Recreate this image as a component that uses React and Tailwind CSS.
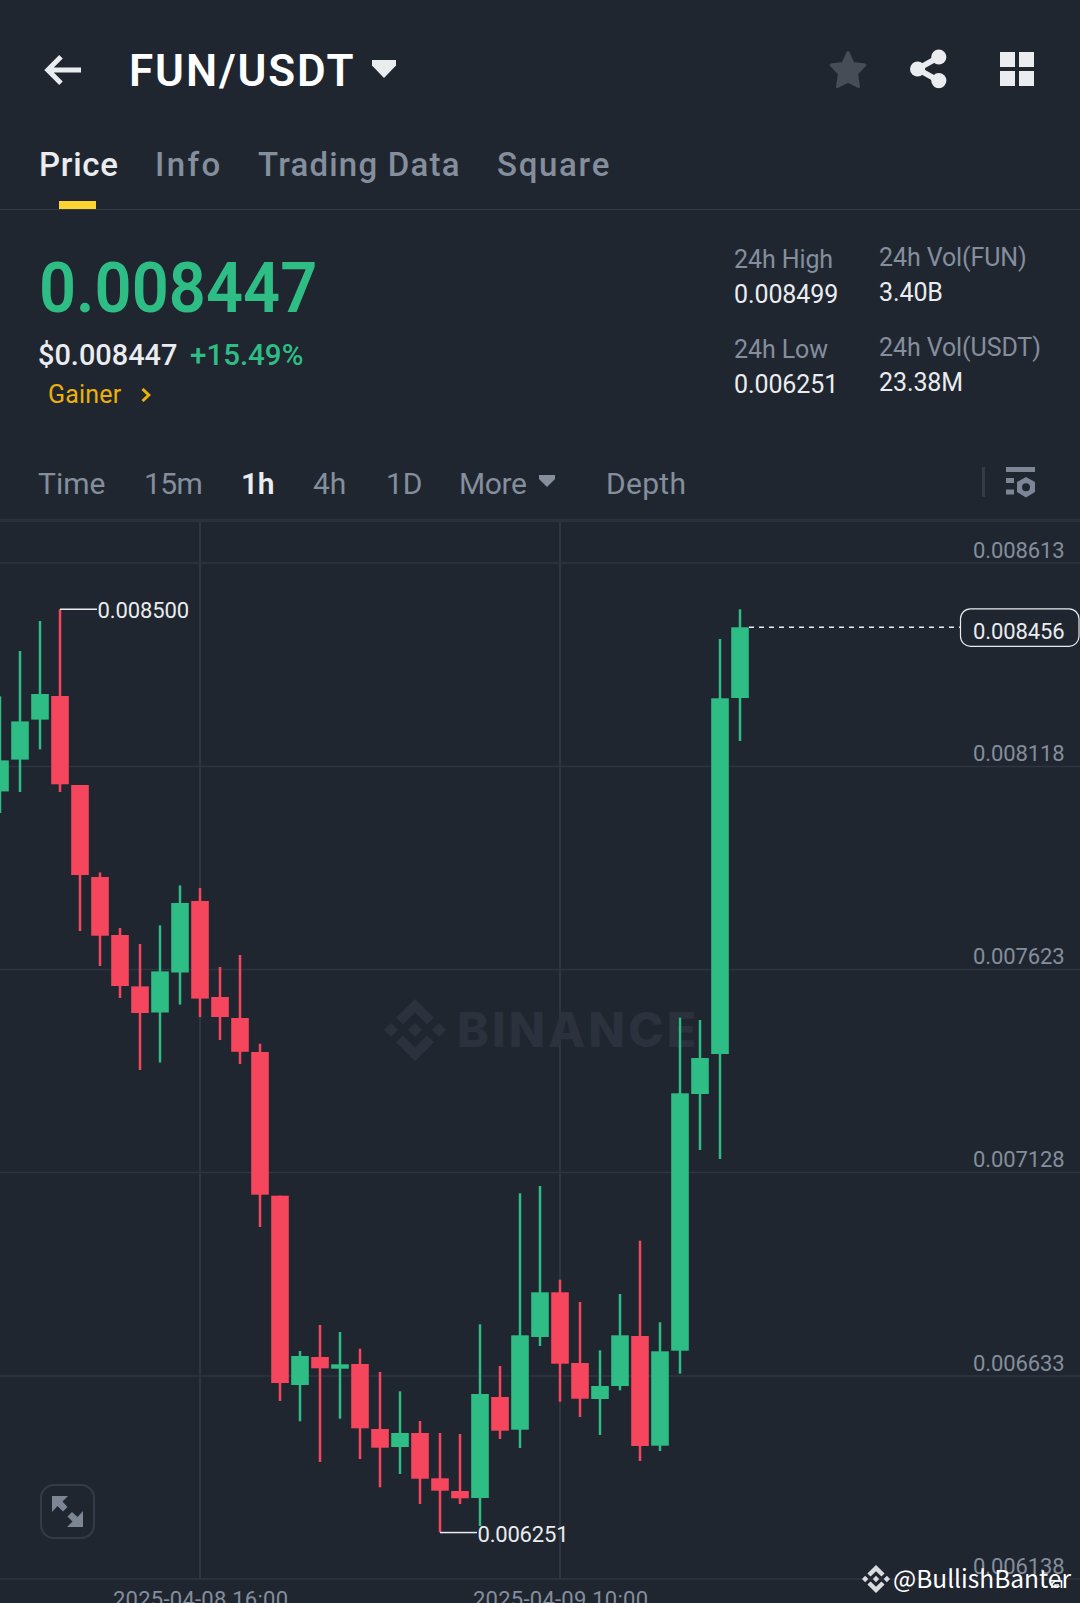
import React, { useState } from "react";

const GREEN = "#2EBD85";
const RED = "#F6465D";

// [x, high, bodyTop, bodyBottom, low, up]
const candles = [
  [0, 696.4, 760.4, 791.4, 813, 1],
  [20, 651, 721.4, 759.6, 792, 1],
  [40, 621, 694, 719.6, 749.3, 1],
  [60, 609.3, 696, 784.3, 792, 0],
  [80, 785, 785, 875, 931, 0],
  [100, 872.5, 877, 935.7, 966, 0],
  [120, 928, 935, 986, 998, 0],
  [140, 944, 986.4, 1013, 1070, 0],
  [160, 925.4, 971.4, 1012.5, 1062.5, 1],
  [180, 885.4, 903, 972.5, 1004.6, 1],
  [200, 888, 901, 998.6, 1017, 0],
  [220, 967, 997, 1017, 1040, 0],
  [240, 955, 1018, 1051.8, 1064, 0],
  [260, 1043.7, 1052, 1194.7, 1227, 0],
  [280, 1195.7, 1195.7, 1383, 1401, 0],
  [300, 1351, 1356, 1385, 1421.3, 1],
  [320, 1325, 1357, 1368.3, 1462, 0],
  [340, 1332, 1364.3, 1368.7, 1418.7, 1],
  [360, 1348.7, 1364, 1428.3, 1459, 0],
  [380, 1372, 1429, 1447.7, 1487.3, 0],
  [400, 1391.3, 1433, 1447, 1474, 1],
  [420, 1421, 1433, 1478.7, 1504, 0],
  [440, 1433, 1478.3, 1490.7, 1532.3, 0],
  [460, 1434, 1491, 1498.3, 1504, 0],
  [480, 1324.3, 1394, 1498, 1526, 1],
  [500, 1366, 1397, 1430.7, 1439, 0],
  [520, 1193.3, 1335.3, 1429.7, 1448, 1],
  [540, 1186, 1292.3, 1337, 1346, 1],
  [560, 1279.7, 1292.3, 1363.7, 1401.7, 0],
  [580, 1302, 1363, 1398.7, 1417, 0],
  [600, 1350.3, 1386, 1399, 1435, 1],
  [620, 1294, 1335.3, 1386, 1390.3, 1],
  [640, 1240.7, 1336, 1446, 1461, 0],
  [660, 1322.3, 1351.3, 1445.7, 1451, 1],
  [680, 1017.7, 1093.3, 1350.7, 1373.7, 1],
  [700, 1020, 1058, 1094, 1150, 1],
  [720, 639, 698.3, 1054, 1159, 1],
  [740, 609.3, 627.3, 698, 741, 1],
];

const priceLevels = [
  { y: 563, label: "0.008613" },
  { y: 766.5, label: "0.008118" },
  { y: 969.5, label: "0.007623" },
  { y: 1172.5, label: "0.007128" },
  { y: 1376, label: "0.006633" },
  { y: 1579, label: "0.006138" },
];

const tabs = [
  { name: "Price", className: "w-[76px] mr-10 tracking-[0.7px]" },
  { name: "Info", className: "w-[66px] mr-[37px] tracking-[2.4px]" },
  { name: "Trading Data", className: "w-[201px] mr-[38px] tracking-[1.2px]" },
  { name: "Square", className: "w-[112px] tracking-[1.7px]" },
];

const intervals = [
  { name: "Time", className: "w-[106px]" },
  { name: "15m", className: "w-[97px] tracking-[-0.6px]" },
  { name: "1h", className: "w-[72px] tracking-[-0.5px]" },
  { name: "4h", className: "w-[73px]" },
  { name: "1D", className: "w-[73px]" },
];

const BinanceMark = (props) => (
  <svg viewBox="0 0 62 62" fill="currentColor" {...props}>
    <path d="M31 0 50 18.7 43 25.5 31 13.6 19 25.5 12 18.7Z" />
    <path d="M31 62 50 43.3 43 36.5 31 48.4 19 36.5 12 43.3Z" />
    <path d="M31 24 38 31 31 38 24 31Z" />
    <path d="M7 24 14 31 7 38 0 31Z" />
    <path d="M55 24 62 31 55 38 48 31Z" />
  </svg>
);

const Header = () => (
  <header className="flex items-center h-[139px] pl-[44px] pr-[46px]">
    <svg width="38" height="30" viewBox="0 0 38 30" fill="none" stroke="#EAECEF" strokeWidth="5">
      <path d="M3.5 15H37M17 1.8 3.8 15 17 28.2" />
    </svg>
    <h1 className="ml-[47px] w-[225px] pt-[3px] text-[44px] leading-[60px] font-semibold tracking-[1.9px] text-white whitespace-nowrap">
      FUN/USDT
    </h1>
    <svg className="ml-[18px] -mt-px" width="24" height="18" viewBox="0 0 24 18" fill="#EAECEF">
      <path d="M0 0H24V5.5L12 18 0 5.5Z" />
    </svg>
    <div className="flex items-center ml-auto">
      <svg className="mt-px" width="38" height="40" viewBox="0 0 38 40" fill="#474D57" stroke="#474D57" strokeWidth="3" strokeLinejoin="round">
        <path d="M19 2.5 24 13.5 35.8 15 27.5 23.8 29.5 36.5 19 31.2 8.5 36.5 10.5 23.8 2.2 15 14 13.5Z" />
      </svg>
      <svg className="ml-[43px] -mt-px" width="37" height="40" viewBox="0 0 37 40" fill="#EAECEF">
        <path d="M7.5 20 29 8M7.5 20 29 32" stroke="#EAECEF" strokeWidth="5.5" />
        <circle cx="7.6" cy="20" r="7.6" />
        <circle cx="28.8" cy="8" r="7.6" />
        <circle cx="28.8" cy="31.6" r="7.6" />
      </svg>
      <div className="grid grid-cols-2 gap-1 ml-[53px] -mt-px w-[34px] h-[34px]">
        <i className="bg-[#EAECEF]" />
        <i className="bg-[#EAECEF]" />
        <i className="bg-[#EAECEF]" />
        <i className="bg-[#EAECEF]" />
      </div>
    </div>
  </header>
);

const Tabs = () => {
  const [active, setActive] = useState("Price");

  return (
    <nav className="flex h-[71px] pt-[2px] pl-[39px] border-b border-[#333B47] text-[33px] leading-[48px] font-medium whitespace-nowrap">
      {tabs.map((tab) => (
        <button
          key={tab.name}
          onClick={() => setActive(tab.name)}
          className={`flex flex-col items-start ${tab.className} ${active === tab.name ? "text-[#EAECEF]" : "text-[#848E9C]"}`}
        >
          <span>{tab.name}</span>
          {active === tab.name && <span className="self-center mt-3 w-[37px] h-2 bg-[#FCD535]" />}
        </button>
      ))}
    </nav>
  );
};

const Stat = ({ label, value }) => (
  <div className="text-[25px] leading-[35px] tracking-[-0.1px] whitespace-nowrap">
    <p className="text-[#848E9C]">{label}</p>
    <p className="text-[#EAECEF]">{value}</p>
  </div>
);

const Summary = () => (
  <section className="flex justify-between h-[238px] pl-[38px]">
    <div className="pt-[42px]">
      <p className="ml-px text-[70px] leading-[72px] font-semibold text-[#2EBD85] origin-left scale-x-[0.928]">0.008447</p>
      <div className="flex mt-[13px] text-[29.5px] leading-9 font-medium whitespace-nowrap">
        <span className="w-[152px] text-[#EAECEF] origin-left scale-x-[0.98]">$0.008447</span>
        <span className="text-[#2EBD85]">+15.49%</span>
      </div>
      <div className="flex items-center mt-[6px] pl-[10px] text-[25px] leading-8 text-[#EAB00C]">
        <span className="w-[93px] tracking-[0.2px]">Gainer</span>
        <svg className="-mt-px" width="10" height="14" viewBox="0 0 10 14" fill="none" stroke="currentColor" strokeWidth="3">
          <path d="M1.5 1 7.8 7 1.5 13" />
        </svg>
      </div>
    </div>
    <div className="flex w-[346px]">
      <div className="flex flex-col gap-5 w-[145px] pt-8">
        <Stat label="24h High" value="0.008499" />
        <Stat label="24h Low" value="0.006251" />
      </div>
      <div className="flex flex-col gap-5 pt-[30px]">
        <Stat label="24h Vol(FUN)" value="3.40B" />
        <Stat label="24h Vol(USDT)" value="23.38M" />
      </div>
    </div>
  </section>
);

const IntervalBar = () => {
  const [selected, setSelected] = useState("1h");

  return (
    <div className="flex items-center h-[74px] pl-[38px] pr-[45px] border-b-[3px] border-[#29313C] text-[30px] text-[#848E9C] whitespace-nowrap">
      {intervals.map((item) => (
        <button
          key={item.name}
          onClick={() => setSelected(item.name)}
          className={`text-left ${item.className} ${selected === item.name ? "font-semibold text-[#EAECEF]" : ""}`}
        >
          {item.name}
        </button>
      ))}
      <button className="flex items-center w-[147px]">
        <span className="w-[80px] text-left tracking-[-0.4px]">More</span>
        <svg className="-mt-[5px]" width="16" height="12" viewBox="0 0 16 12" fill="currentColor">
          <path d="M0 0H16V4L8 12 0 4Z" />
        </svg>
      </button>
      <button className="tracking-[0.3px]">Depth</button>
      <span className="ml-auto mr-[21px] -mt-[3px] w-[3px] h-[30px] bg-[#333B47]" />
      <svg className="-mt-[3px]" width="29" height="31" viewBox="0 0 29 31" fill="#7D8695">
        <path d="M0 0H29V5H0ZM0 11H8V16H0ZM0 22.5H8V27.5H0Z" />
        <path fillRule="evenodd" d="M20 10 29 15V25L20 30.5 11 25V15ZM20 16.2A4 4 0 1 0 20 24.2 4 4 0 1 0 20 16.2Z" />
      </svg>
    </div>
  );
};

const Chart = () => (
  <svg className="block" width="1080" height="1081" viewBox="0 522 1080 1081" fontFamily="Roboto, sans-serif" fontSize="22">
    {/* grid */}
    <g fill="#2E3540">
      <rect x="199" y="522" width="2" height="1057" />
      <rect x="559" y="522" width="2" height="1057" />
      {priceLevels.map((level) => (
        <rect key={level.label} x="0" y={level.y - 0.75} width="1080" height="1.5" />
      ))}
    </g>

    {/* watermark */}
    <BinanceMark x="384" y="999" width="62" height="62" color="#2B313D" />
    <text x="457" y="1047" fontFamily="Inter, sans-serif" fontSize="48" fontWeight="800" fill="#2B313D" textLength="239">
      BINANCE
    </text>

    {candles.map(([x, high, top, bottom, low, up]) => (
      <g key={x} fill={up ? GREEN : RED}>
        <rect x={x - 1.25} y={high} width="2.5" height={low - high} />
        <rect x={x - 8.8} y={top} width="17.6" height={bottom - top} />
      </g>
    ))}

    <g fill="#848E9C">
      {priceLevels.map((level) => (
        <text key={level.label} x="973" y={level.y - 5.2} textLength="91.5">{level.label}</text>
      ))}
      <text x="113" y="1607" textLength="175">2025-04-08 16:00</text>
      <text x="473" y="1607" textLength="175">2025-04-09 10:00</text>
    </g>

    {/* high / low markers */}
    <g fill="#EAECEF">
      <rect x="60" y="608.5" width="37" height="1.5" />
      <text x="97.5" y="617.5" textLength="91.5">0.008500</text>
      <rect x="440" y="1531.8" width="37" height="1.5" />
      <text x="477.5" y="1541.5" textLength="91">0.006251</text>
    </g>

    {/* last price */}
    <path d="M749 627.3H960" stroke="#EAECEF" strokeWidth="1.5" strokeDasharray="5 5" />
    <rect x="960.5" y="608.8" width="118.5" height="37.5" rx="10" fill="#202630" stroke="#EAECEF" strokeWidth="1.2" />
    <text x="973" y="638.5" fill="#EAECEF" textLength="91.5">0.008456</text>

    {/* fullscreen button */}
    <rect x="41" y="1485" width="53" height="53" rx="13" fill="none" stroke="#333B47" strokeWidth="2" />
    <g fill="#7D8695">
      <path d="M52 1496H68L62.5 1501.5 67.5 1507 63 1511.5 57.5 1506 52 1512Z" />
      <path d="M83 1527H67L72.5 1521.5 67.5 1516.5 72 1512 77.5 1517 83 1511Z" />
    </g>
  </svg>
);

const App = () => {
  return (
    <div className="relative w-[1080px] h-[1603px] overflow-hidden bg-[#202630] font-[Roboto,sans-serif]">
      <Header />
      <Tabs />
      <Summary />
      <IntervalBar />
      <Chart />
      <div className="absolute left-[862px] top-[1560px] flex items-center h-9 whitespace-nowrap">
        <BinanceMark className="mt-px w-7 h-7 text-[#D9DBDF]" />
        <span className="ml-[3px] text-[24.5px] text-white font-['Noto_Sans_CJK_SC',sans-serif]">@BullishBanter</span>
        {/* axis scale toggle, half hidden by the username */}
        <svg className="absolute left-[189px] top-[20px]" width="12" height="9" viewBox="0 0 12 9" fill="none" stroke="#fff" strokeWidth="1.6">
          <path d="M1 8V4L4 1H10.5V8M4 8V5H8" />
        </svg>
      </div>
    </div>
  );
};

export default App;
